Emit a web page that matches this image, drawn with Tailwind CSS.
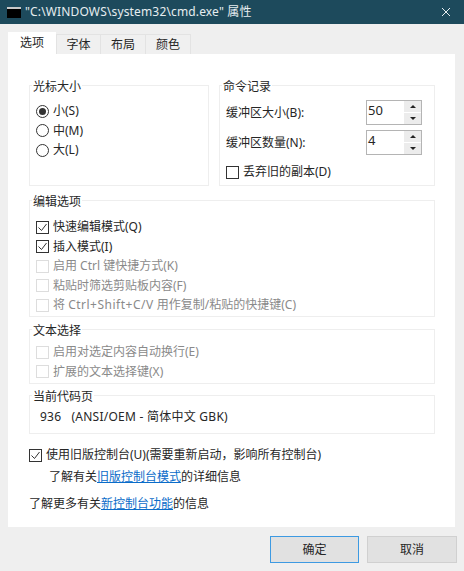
<!DOCTYPE html>
<html lang="zh-CN">
<head>
<meta charset="UTF-8">
<title>cmd.exe 属性</title>
<script src="https://cdn.jsdelivr.net/npm/@tailwindcss/browser@4"></script>
</head>
<body class="w-[464px] h-[571px] overflow-hidden bg-[#efefef] text-[#262626] text-[12px] leading-[16px] font-['Noto_Sans','Noto_Sans_CJK_SC',sans-serif]">

<!-- title bar -->
<div class="h-[24px] bg-[#1d4a5c] flex items-center pl-[7px] pr-[13px] text-[#e6edf0]">
  <div class="w-[14px] h-[11px] bg-black border-t-2 border-[#c9c9c9] mr-[4px]"></div>
  <span class="flex-1 text-[12px] tracking-[0.15px]">"C:\WINDOWS\system32\cmd.exe" 属性</span>
  <svg width="10" height="10" viewBox="0 0 10 10" class="stroke-[#e6edf0]"><path d="M1 1l8 8M9 1l-8 8" fill="none"/></svg>
</div>

<!-- tabs -->
<div class="flex items-end h-[30px] pl-[8px]">
  <div class="w-[48px] h-[22px] bg-white flex items-center justify-center">选项</div>
  <div class="w-[45px] h-[20px] bg-[#f0f0f0] border border-b-0 border-[#e3e3e3] flex items-center justify-center">字体</div>
  <div class="w-[45px] h-[20px] bg-[#f0f0f0] border border-b-0 border-l-0 border-[#e3e3e3] flex items-center justify-center">布局</div>
  <div class="w-[45px] h-[20px] bg-[#f0f0f0] border border-b-0 border-l-0 border-[#e3e3e3] flex items-center justify-center">颜色</div>
</div>

<!-- panel -->
<div class="ml-[8px] w-[447px] h-[473px] bg-white pt-[31px] pl-[21px] pr-[20px]">
  <div class="flex gap-[10px]">
    <div class="w-[180px] h-[101px] border border-[#eeeeee] pl-[6px]">
      <div class="-mt-[7px] w-fit bg-white px-[1px] -ml-[4px]">光标大小</div>
      <div class="mt-[8px] flex flex-col gap-[3.5px]">
        <div class="flex items-center gap-[4px] h-[16px]">
          <span class="w-[13px] h-[13px] rounded-full border border-[#333] flex items-center justify-center"><span class="w-[7px] h-[7px] rounded-full bg-[#333]"></span></span>小(S)
        </div>
        <div class="flex items-center gap-[4px] h-[16px]">
          <span class="w-[13px] h-[13px] rounded-full border border-[#333]"></span>中(M)
        </div>
        <div class="flex items-center gap-[4px] h-[16px]">
          <span class="w-[13px] h-[13px] rounded-full border border-[#333]"></span>大(L)
        </div>
      </div>
    </div>

    <div class="w-[216px] h-[101px] border border-[#eeeeee] pl-[6px]">
      <div class="-mt-[7px] w-fit bg-white px-[1px] -ml-[4px]">命令记录</div>
      <div class="mt-[5px] flex items-center h-[24px]">
        <span class="w-[140px] pt-[2px]">缓冲区大小(B):</span>
        <div class="w-[56px] h-[25px] border border-[#b4b4b4] flex">
          <span class="flex-1 pl-[1px] pt-[1px] text-[13px] leading-[16px]">50</span>
          <div class="w-[17px] flex flex-col gap-[1px]">
            <span class="flex-1 bg-[#ececec] flex items-center justify-center"><svg width="6" height="3"><path d="M0 3L3 0L6 3Z" fill="#222"/></svg></span>
            <span class="flex-1 bg-[#ececec] flex items-center justify-center"><svg width="6" height="3"><path d="M0 0L6 0L3 3Z" fill="#222"/></svg></span>
          </div>
        </div>
      </div>
      <div class="mt-[6px] flex items-center h-[24px]">
        <span class="w-[140px] pt-[2px]">缓冲区数量(N):</span>
        <div class="w-[56px] h-[25px] border border-[#b4b4b4] flex">
          <span class="flex-1 pl-[1px] pt-[1px] text-[13px] leading-[16px]">4</span>
          <div class="w-[17px] flex flex-col gap-[1px]">
            <span class="flex-1 bg-[#ececec] flex items-center justify-center"><svg width="6" height="3"><path d="M0 3L3 0L6 3Z" fill="#222"/></svg></span>
            <span class="flex-1 bg-[#ececec] flex items-center justify-center"><svg width="6" height="3"><path d="M0 0L6 0L3 3Z" fill="#222"/></svg></span>
          </div>
        </div>
      </div>
      <div class="mt-[10px] flex items-center gap-[4px] h-[16px]">
        <span class="w-[13px] h-[13px] border border-[#333]"></span>丢弃旧的副本(D)
      </div>
    </div>
  </div>

  <div class="mt-[14px] h-[117px] border border-[#eeeeee] pl-[6px]">
    <div class="-mt-[7px] w-fit bg-white px-[1px] -ml-[4px]">编辑选项</div>
    <div class="mt-[9px] flex flex-col gap-[3.5px]">
      <div class="flex items-center gap-[4px] h-[16px]">
        <span class="w-[13px] h-[13px] border border-[#333] flex items-center justify-center"><svg width="11" height="11" viewBox="0 0 11 11"><path d="M1.5 5.5l3 3 5-6.5" fill="none" stroke="#333"/></svg></span>快速编辑模式(Q)
      </div>
      <div class="flex items-center gap-[4px] h-[16px]">
        <span class="w-[13px] h-[13px] border border-[#333] flex items-center justify-center"><svg width="11" height="11" viewBox="0 0 11 11"><path d="M1.5 5.5l3 3 5-6.5" fill="none" stroke="#333"/></svg></span>插入模式(I)
      </div>
      <div class="flex items-center gap-[4px] h-[16px] text-[#8a8a8a]">
        <span class="w-[13px] h-[13px] border border-[#dddddd]"></span>启用 Ctrl 键快捷方式(K)
      </div>
      <div class="flex items-center gap-[4px] h-[16px] text-[#8a8a8a]">
        <span class="w-[13px] h-[13px] border border-[#dddddd]"></span>粘贴时筛选剪贴板内容(F)
      </div>
      <div class="flex items-center gap-[4px] h-[16px] text-[#8a8a8a]">
        <span class="w-[13px] h-[13px] border border-[#dddddd]"></span><span>将 <span class="tracking-[0.5px]">Ctrl+Shift+C/V</span> 用作复制/粘贴的快捷键(C)</span>
      </div>
    </div>
  </div>

  <div class="mt-[12px] h-[55px] border border-[#eeeeee] pl-[6px]">
    <div class="-mt-[7px] w-fit bg-white px-[1px] -ml-[4px]">文本选择</div>
    <div class="mt-[5px] flex flex-col gap-[3.5px]">
      <div class="flex items-center gap-[4px] h-[16px] text-[#8a8a8a]">
        <span class="w-[13px] h-[13px] border border-[#dddddd]"></span>启用对选定内容自动换行(E)
      </div>
      <div class="flex items-center gap-[4px] h-[16px] text-[#8a8a8a]">
        <span class="w-[13px] h-[13px] border border-[#dddddd]"></span>扩展的文本选择键(X)
      </div>
    </div>
  </div>

  <div class="mt-[11px] h-[39px] border border-[#eeeeee] pl-[6px]">
    <div class="-mt-[7px] w-fit bg-white px-[1px] -ml-[4px]">当前代码页</div>
    <div class="mt-[4px] pl-[4px] whitespace-pre tracking-[0.25px]">936   (ANSI/OEM - 简体中文 GBK)</div>
  </div>

  <div class="mt-[13px] flex items-center gap-[4px] h-[16px]">
    <span class="w-[13px] h-[13px] border border-[#333] flex items-center justify-center"><svg width="11" height="11" viewBox="0 0 11 11"><path d="M1.5 5.5l3 3 5-6.5" fill="none" stroke="#333"/></svg></span>使用旧版控制台(U)(需要重新启动，影响所有控制台)
  </div>
  <div class="mt-[6px] pl-[20px] h-[16px]">了解有关<a class="text-[#0a6cc9] underline">旧版控制台模式</a>的详细信息</div>
  <div class="mt-[11px] h-[16px]">了解更多有关<a class="text-[#0a6cc9] underline">新控制台功能</a>的信息</div>
</div>

<!-- buttons -->
<div class="flex justify-end gap-[8px] pr-[7px] mt-[9px]">
  <div class="w-[89px] h-[27px] bg-[#e1e1e1] border border-[#3d9ae2] flex items-center justify-center">确定</div>
  <div class="w-[90px] h-[27px] bg-[#e1e1e1] border border-[#d0d0d0] flex items-center justify-center">取消</div>
</div>
</body>
</html>
